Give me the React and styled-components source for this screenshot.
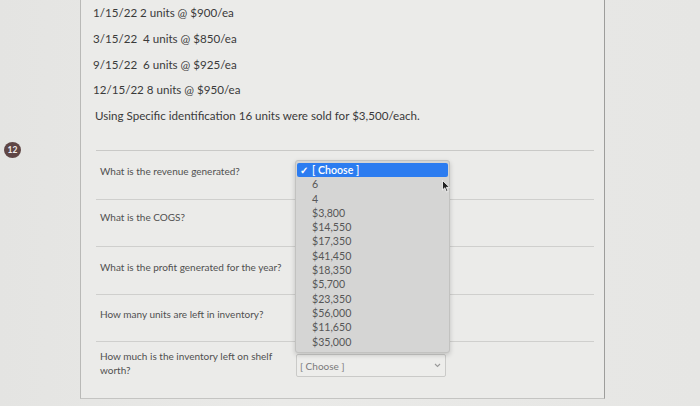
import React from 'react';
import styled, { createGlobalStyle } from 'styled-components';

const GlobalStyle = createGlobalStyle`
  html, body {
    margin: 0;
    padding: 0;
    background: #e8e8e6;
    font-family: Lato, "Open Sans", sans-serif;
  }
`

const Page = styled.div`
  display: flex;
  width: 700px;
  height: 406px;
  overflow: hidden;
  background: linear-gradient(to right, #e4e4e2 0%, #eaeae8 40%, #e6e6e4 100%);
`
const Gutter = styled.div`
  width: 80px;
  flex-shrink: 0;
  padding-top: 142px;
  padding-left: 4px;
  box-sizing: border-box;
`
const Badge = styled.div`
  width: 17px;
  height: 16px;
  border-radius: 50%;
  background: #5f4645;
  color: #f2eeee;
  font-size: 8.5px;
  font-weight: 700;
  display: flex;
  align-items: center;
  justify-content: center;
`
const Panel = styled.div`
  width: 525px;
  height: 399px;
  flex-shrink: 0;
  border-left: 1px solid #b9b9b7;
  border-right: 1px solid #9d9d9b;
  border-bottom: 1px solid #c4c4c2;
  background: #ebebe9;
  box-sizing: border-box;
`
const Lines = styled.div`
  padding: 0 0 0 12px;
  height: 150px;
`
const Line = styled.p`
  margin: 0;
  font-size: 11.6px;
  line-height: 25.8px;
  color: #3a3a3a;
  padding-left: ${p => p.$indent || 0}px;
`
const Questions = styled.div`
  position: relative;
  margin-left: 15px;
  width: 498px;
  border-top: 1px solid #c9c9c7;
`
const Row = styled.div`
  display: grid;
  grid-template-columns: 200px 150px;
  align-items: start;
  height: ${p => p.$h}px;
  border-bottom: ${p => (p.$last ? 'none' : '1px solid #cfcfcd')};
  box-sizing: border-box;
  padding-top: ${p => p.$pad}px;
`
const Label = styled.div`
  font-size: 10px;
  line-height: 14px;
  color: #505050;
  padding-left: 4px;
`
const Select = styled.div`
  height: 23px;
  margin-top: ${p => p.$top || 0}px;
  border: 1px solid #cacac8;
  border-radius: 2px;
  background: #ededeb;
  display: flex;
  align-items: center;
  justify-content: space-between;
  padding: 0 4px 0 3px;
  box-sizing: border-box;
  font-size: 10px;
  color: #7a7a7a;
`
const Menu = styled.div`
  position: absolute;
  left: 199px;
  top: 9px;
  width: 155px;
  height: 193px;
  background: #d5d5d4;
  border: 1px solid #c2c2c0;
  border-radius: 3px;
  box-shadow: 0 2px 5px rgba(0, 0, 0, 0.18);
  box-sizing: border-box;
  padding-top: 2px;
`
const Item = styled.div`
  height: 14.3px;
  line-height: 14.3px;
  font-size: 10.6px;
  padding-left: 15px;
  margin: 0 1px;
  color: ${p => (p.$active ? '#fff' : '#575757')};
  background: ${p => (p.$active ? '#2c7cf0' : 'transparent')};
  font-weight: ${p => (p.$active ? 600 : 400)};
  border-radius: 2px;
  position: relative;
`
const Check = styled.span`
  position: absolute;
  left: 3px;
  top: 0;
  font-size: 10px;
`
const Cursor = styled.svg`
  position: absolute;
  left: 346px;
  top: 29px;
`

const options = ['6', '4', '$3,800', '$14,550', '$17,350', '$41,450', '$18,350', '$5,700', '$23,350', '$56,000', '$11,650', '$35,000'];

const rows = [
  { q: 'What is the revenue generated?', h: 49, pad: 13 },
  { q: 'What is the COGS?', h: 47, pad: 10 },
  { q: 'What is the profit generated for the year?', h: 48, pad: 13 },
  { q: 'How many units are left in inventory?', h: 47, pad: 12 },
  { q: 'How much is the inventory left on shelf worth?', h: 57, pad: 7, last: true }
];

const Chevron = () => (
  <svg width="7" height="5" viewBox="0 0 7 5">
    <path d="M1 1 L3.5 3.5 L6 1" stroke="#9a9a9a" strokeWidth="1.1" fill="none" />
  </svg>
);

const App = () => (
  <>
    <GlobalStyle />
    <Page>
      <Gutter>
        <Badge>12</Badge>
      </Gutter>
      <Panel>
        <Lines>
          <Line>1/15/22 2 units @ $900/ea</Line>
          <Line>3/15/22&nbsp; 4 units @ $850/ea</Line>
          <Line>9/15/22&nbsp; 6 units @ $925/ea</Line>
          <Line>12/15/22 8 units @ $950/ea</Line>
          <Line $indent={2}>Using Specific identification 16 units were sold for $3,500/each.</Line>
        </Lines>
        <Questions>
          {rows.map((r, i) => (
            <Row key={i} $h={r.h} $pad={r.pad} $last={r.last}>
              <Label>{r.q}</Label>
              {r.last && (
                <Select $top={5}>
                  <span>[ Choose ]</span>
                  <Chevron />
                </Select>
              )}
            </Row>
          ))}
          <Menu>
            <Item $active>
              <Check>✓</Check>[ Choose ]
            </Item>
            {options.map(o => (
              <Item key={o}>{o}</Item>
            ))}
          </Menu>
          <Cursor width="8" height="13" viewBox="0 0 8 13">
            <path d="M0.5 0.5 L0.5 10 L2.8 7.8 L4.6 12 L6 11.3 L4.3 7.3 L7.5 7.3 Z" fill="#222" stroke="#fff" strokeWidth="0.8" />
          </Cursor>
        </Questions>
      </Panel>
    </Page>
  </>
);

export default App;
